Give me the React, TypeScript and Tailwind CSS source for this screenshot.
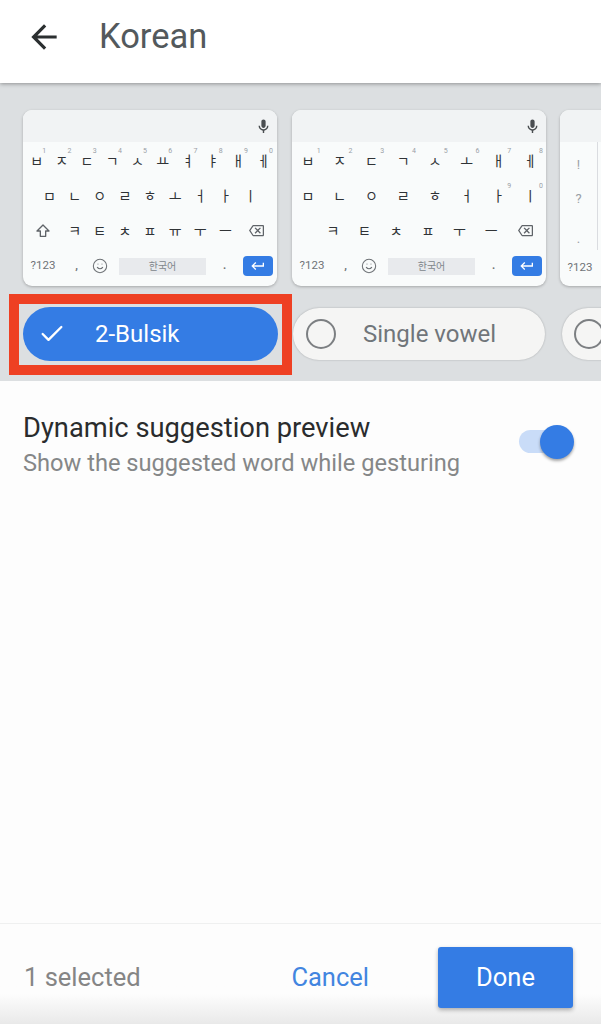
import { Check, Smile } from "lucide-react";

const ROW1_FULL = ["ㅂ", "ㅈ", "ㄷ", "ㄱ", "ㅅ", "ㅛ", "ㅕ", "ㅑ", "ㅐ", "ㅔ"];
const ROW2_FULL = ["ㅁ", "ㄴ", "ㅇ", "ㄹ", "ㅎ", "ㅗ", "ㅓ", "ㅏ", "ㅣ"];
const ROW3_FULL = ["ㅋ", "ㅌ", "ㅊ", "ㅍ", "ㅠ", "ㅜ", "ㅡ"];

const ROW1_VOWEL = ["ㅂ", "ㅈ", "ㄷ", "ㄱ", "ㅅ", "ㅗ", "ㅐ", "ㅔ"];
const ROW2_VOWEL = ["ㅁ", "ㄴ", "ㅇ", "ㄹ", "ㅎ", "ㅓ", "ㅏ", "ㅣ"];
const ROW3_VOWEL = ["ㅋ", "ㅌ", "ㅊ", "ㅍ", "ㅜ", "ㅡ"];

function Mic({ className }: { className: string }) {
  return (
    <svg viewBox="0 0 24 24" className={className} fill="currentColor">
      <path d="M12 14c1.66 0 3-1.34 3-3V5c0-1.66-1.34-3-3-3S9 3.34 9 5v6c0 1.66 1.34 3 3 3zm5-3c0 2.76-2.24 5-5 5s-5-2.24-5-5H5c0 3.53 2.61 6.43 6 6.92V21h2v-3.08c3.39-.49 6-3.39 6-6.92h-2z" />
    </svg>
  );
}

function Backspace() {
  return (
    <div className="flex w-[37px] shrink-0 justify-center">
      <svg viewBox="0 0 24 24" className="h-[15px] w-[15px] text-[#5f6368]" fill="currentColor">
        <path d="M22 3H7c-.69 0-1.23.35-1.59.88L0 12l5.41 8.11c.36.53.9.89 1.59.89h15c1.1 0 2-.9 2-2V5c0-1.1-.9-2-2-2zm0 16H7.07L2.4 12l4.66-7H22v14zm-11.59-2L14 13.41 17.59 17 19 15.59 15.41 12 19 8.41 17.59 7 14 10.59 10.41 7 9 8.41 12.59 12 9 15.59z" />
      </svg>
    </div>
  );
}

function Enter() {
  return (
    <div className="flex h-[20px] w-[30px] items-center justify-center rounded-[4px] bg-[#347ce4]">
      <svg viewBox="0 0 24 24" className="h-[16px] w-[16px] text-white" fill="currentColor">
        <path d="M19 7v4H5.83l3.58-3.59L8 6l-6 6 6 6 1.41-1.41L5.83 13H21V7z" />
      </svg>
    </div>
  );
}

function Key({ ch, sup }: { ch: string; sup?: string }) {
  return (
    <div className="relative flex h-[35px] flex-1 items-center justify-center text-[14px] leading-none text-[#303336]">
      {ch}
      {sup && (
        <span className="absolute right-[3px] top-[5px] text-[7px] leading-none text-[#9aa0a6]">{sup}</span>
      )}
    </div>
  );
}

function BottomRow() {
  return (
    <div className="flex h-[36px] items-center pl-[2px] pr-[4px] text-[#6f7377]">
      <span className="w-[36px] text-center text-[11.5px]">?123</span>
      <span className="w-[31px] text-center text-[11px] font-bold">,</span>
      <Smile className="h-[16px] w-[16px] shrink-0" strokeWidth={1.6} />
      <div className="ml-[11px] flex h-[17px] w-[87px] shrink-0 items-center justify-center bg-[#e8eaed] text-[10px] text-[#80868b]">한국어</div>
      <span className="flex-1 text-center text-[11px] font-bold">.</span>
      <Enter />
    </div>
  );
}

function Card({ children, first }: { children: React.ReactNode; first?: boolean }) {
  return (
    <div
      className={
        first
          ? "mr-[1px] h-[176px] w-[254px] shrink-0 overflow-hidden rounded-[9px] bg-[#f9fbfb] shadow-[0_1px_3px_rgba(0,0,0,0.25)]"
          : "h-[176px] w-[254px] shrink-0 overflow-hidden rounded-[9px] bg-[#f9fbfb] shadow-[0_1px_3px_rgba(0,0,0,0.25)]"
      }
    >
      {children}
    </div>
  );
}

function MicStrip() {
  return (
    <div className="flex h-[32px] items-center justify-end bg-[#f1f3f4] pr-[5px] text-[#4a4e51]">
      <Mic className="h-[17px] w-[17px]" />
    </div>
  );
}

export default function App() {
  return (
    <div className="flex h-screen w-[601px] flex-col overflow-hidden bg-[#fdfdfd] font-['Roboto','Noto_Sans_CJK_KR',sans-serif] antialiased">
      <header className="z-10 flex h-[83px] shrink-0 items-center bg-white pb-[10px] shadow-[0_1px_4px_rgba(0,0,0,0.35)]">
        <svg viewBox="0 0 24 24" className="ml-[25px] h-[38px] w-[38px] text-[#2b2f30]" fill="currentColor">
          <path d="M20 11H7.83l5.59-5.59L12 4l-8 8 8 8 1.41-1.41L7.83 13H20v-2z" />
        </svg>
        <h1 className="ml-[36px] text-[34.5px] font-normal text-[#53595c]">Korean</h1>
      </header>

      <section className="relative h-[298px] shrink-0 overflow-hidden bg-[#dcdfe1] pl-[23px] pt-[27px]">
        <div className="flex gap-[14px]">
          <Card first>
            <MicStrip />
            <div className="flex px-[1px] pt-[1px]">
              {ROW1_FULL.map((k, i) => (
                <Key key={k} ch={k} sup={String((i + 1) % 10)} />
              ))}
            </div>
            <div className="flex px-[14px]">
              {ROW2_FULL.map((k) => (
                <Key key={k} ch={k} />
              ))}
            </div>
            <div className="flex items-center pl-[12px] pr-[2px]">
              <svg viewBox="0 0 24 24" className="mr-[11px] h-[16px] w-[16px] shrink-0 text-[#5f6368]" fill="none" stroke="currentColor" strokeWidth="2" strokeLinejoin="round">
                <path d="M12 3 3 12h5v8h8v-8h5z" />
              </svg>
              {ROW3_FULL.map((k) => (
                <Key key={k} ch={k} />
              ))}
              <Backspace />
            </div>
            <BottomRow />
          </Card>

          <Card>
            <MicStrip />
            <div className="flex pt-[1px]">
              {ROW1_VOWEL.map((k, i) => (
                <Key key={k} ch={k} sup={String(i + 1)} />
              ))}
            </div>
            <div className="flex">
              {ROW2_VOWEL.map((k, i) => (
                <Key key={k} ch={k} sup={i === 6 ? "9" : i === 7 ? "0" : undefined} />
              ))}
            </div>
            <div className="flex items-center pl-[25px] pr-[2px]">
              {ROW3_VOWEL.map((k) => (
                <Key key={k} ch={k} />
              ))}
              <Backspace />
            </div>
            <BottomRow />
          </Card>

          <Card>
            <MicStrip />
            <div className="flex h-[108px] w-[38px] flex-col items-center border-r border-[#dadce0] pt-[13px] text-[13px] leading-[20px] text-[#9aa0a6]">
              <span>!</span>
              <span className="mt-[14px]">?</span>
              <span className="mt-[20px]">.</span>
            </div>
            <div className="flex h-[36px] items-center pl-[2px] text-[#6f7377]">
              <span className="w-[36px] text-center text-[11.5px]">?123</span>
            </div>
          </Card>
        </div>

        <div className="mt-[21px] flex">
          <div className="flex h-[54px] w-[255px] shrink-0 items-center rounded-full bg-[#347ce4] pl-[15px] text-white">
            <Check className="h-[28px] w-[28px]" strokeWidth={2} />
            <span className="ml-[29px] text-[24px]">2-Bulsik</span>
          </div>
          <div className="ml-[15px] flex h-[52px] w-[252px] shrink-0 items-center self-center rounded-full bg-[#f5f5f4] pl-[13px] text-[#70757a] shadow-[0_0_2px_rgba(0,0,0,0.25)]">
            <span className="h-[30px] w-[30px] rounded-full border-[2px] border-[#7c7f82]" />
            <span className="ml-[27px] text-[24px]">Single vowel</span>
          </div>
          <div className="ml-[17px] flex h-[52px] w-[252px] shrink-0 items-center self-center rounded-full bg-[#f5f5f4] pl-[12px] shadow-[0_0_2px_rgba(0,0,0,0.25)]">
            <span className="h-[30px] w-[30px] rounded-full border-[2px] border-[#7c7f82]" />
          </div>
        </div>

        <div className="absolute left-[9px] top-[211px] h-[81px] w-[283px] border-[10px] border-[#ee4023]" />
      </section>

      <div className="flex flex-1 items-start justify-between pl-[23px] pr-[35px] pt-[28px]">
        <div>
          <p className="text-[27.3px] leading-[38px] text-[#2a2c2d]">Dynamic suggestion preview</p>
          <p className="mt-[1px] text-[23.65px] leading-[30px] text-[#858788]">Show the suggested word while gesturing</p>
        </div>
        <div className="relative mt-[21px] h-[23px] w-[47px] rounded-full bg-[#c9dcf8]">
          <span className="absolute -right-[8px] -top-[5px] h-[34px] w-[34px] rounded-full bg-[#347ce4] shadow-[0_2px_3px_rgba(0,0,0,0.35)]" />
        </div>
      </div>

      <footer className="flex h-[101px] shrink-0 items-center border-t border-[#eff0f0] bg-gradient-to-b from-[#fdfdfd] from-70% to-[#e9e9e9] pl-[24px] pr-[28px]">
        <span className="mt-[7px] text-[25.5px] text-[#858585]">1 selected</span>
        <span className="ml-auto mt-[7px] text-[25.5px] text-[#4285e0]">Cancel</span>
        <button className="ml-[69px] mt-[7px] h-[61px] w-[135px] rounded-[3px] bg-[#347ce4] text-[25.5px] text-white shadow-[0_2px_4px_rgba(0,0,0,0.3)]">
          Done
        </button>
      </footer>
    </div>
  );
}
